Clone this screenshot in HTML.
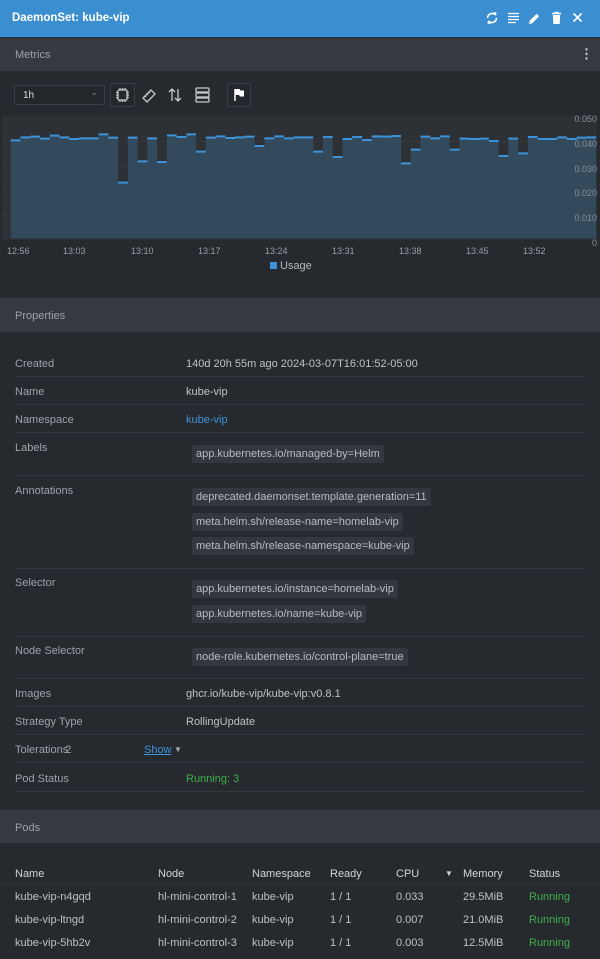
<!DOCTYPE html>
<html><head><meta charset="utf-8">
<style>
*{margin:0;padding:0;box-sizing:border-box}
body{width:600px;height:959px;background:#262a2f;font-family:"Liberation Sans",sans-serif;font-size:11px;color:#bfc1c4;position:relative;overflow:hidden}
.a{position:absolute;white-space:nowrap}
.top{position:absolute;left:0;top:0;width:600px;height:37px;background:#3b8fd0;border-bottom:1px solid #3aa0ee}
.hdr{position:absolute;left:0;width:600px;height:34px;background:#363a40;color:#9ea3a8;font-size:11px;padding:12px 15px}
.lbl{color:#9ea3a8}
.sep{position:absolute;left:15px;width:570px;height:1px;background:#33373d}
.chip{position:absolute;left:192px;height:18px;background:#34383e;color:#b9bcbf;padding:3px 4px;border-radius:2px;font-size:11px;white-space:nowrap}
.th{color:#d2d4d6;font-size:11px}
.g{color:#3fae49}
</style></head><body>
<div class="top"></div>
<div class="a" style="left:12px;top:12px;color:#fff;font-weight:bold;font-size:11.5px">DaemonSet: kube-vip</div>
<svg class="a" style="left:484px;top:9px" width="105" height="18" viewBox="0 0 105 18" fill="#fff" stroke="#fff">
<path d="M3.5 9a4.5 4.5 0 0 1 7.5-3.3M12.5 9a4.5 4.5 0 0 1-7.5 3.3" fill="none" stroke-width="1.6"/>
<path d="M9 3l3.5 0.5-0.5 3.5zM7 15l-3.5-0.5 0.5-3.5z" stroke="none"/>
<path d="M24 4.5h11M24 7.5h11M24 10.5h11M24 13.5h8" stroke-width="1.3"/>
<path d="M45 15l0.7-3.2 7-7 2.5 2.5-7 7z" stroke="none"/>
<path d="M68 4.5h9M70.5 3.5h4" stroke-width="1.5"/>
<path d="M68.8 6h7.4l-0.5 9h-6.4z" stroke="none"/>
<path d="M89.5 4.5l8 8M97.5 4.5l-8 8" stroke-width="1.6"/>
</svg>
<div style="position:absolute;left:0;top:38px;width:600px;height:1px;background:#1e2125"></div>
<div class="hdr" style="top:38px;height:33px;padding-top:11px">Metrics</div>
<div class="a" style="left:585px;top:47px;width:3px;height:14px;background:radial-gradient(circle,#bbb 1.2px,transparent 1.3px) 0 0/3px 4.6px"></div>
<div class="a" style="left:14px;top:85px;width:91px;height:20px;border:1px solid #3a3e44;border-radius:2px;background:#23262a;padding:4px 8px;color:#ddd;font-size:10px">1h<span style="position:absolute;right:6px;top:1px;color:#888;font-size:9px">&#8964;</span></div>
<div class="a" style="left:110px;top:83px;width:25px;height:24px;border:1px solid #3a3e44;border-radius:2px;background:#23262a"></div>
<svg class="a" style="left:110px;top:83px" width="140" height="24" viewBox="0 0 140 24" fill="none" stroke="#c8cacc" stroke-width="1.3">
<rect x="8" y="7" width="9" height="10" rx="1"/><path d="M10 5v2M12.5 5v2M15 5v2M10 17v2M12.5 17v2M15 17v2M6 9.5h2M6 12h2M6 14.5h2M17 9.5h2M17 12h2M17 14.5h2"/>
<path d="M33 15l8-8 4 4-8 8zM35 13l1 1M37 11l1 1M39 9l1 1"/>
<path d="M62 18V6M59 9l3-3 3 3M68 6v12M65 15l3 3 3-3"/>
<rect x="86" y="5" width="13" height="4" rx="1"/><rect x="86" y="10" width="13" height="4" rx="1"/><rect x="86" y="15" width="13" height="4" rx="1"/>
</svg>
<div class="a" style="left:227px;top:83px;width:24px;height:24px;border:1px solid #3a3e44;border-radius:2px;background:#23262a"></div>
<svg class="a" style="left:227px;top:83px" width="24" height="24" viewBox="0 0 24 24"><path d="M8 6v12" stroke="#fff" stroke-width="1.5"/><path d="M8.5 6h4l1 1.5h3.5v6h-4l-1-1.5h-3.5z" fill="#fff"/></svg>
<svg class="a" style="left:0;top:100px" width="600" height="180" viewBox="0 0 1568 540" preserveAspectRatio="none">
<rect x="5" y="48" width="1555" height="372" fill="#2d3136"/>
<g stroke="#383c42" stroke-width="2"><path d="M5 124H1560M5 198H1560M5 272H1560M5 346H1560"/></g>
<path fill="#334a5c" d="M28,415V121H53.5V112H79V110H104.5V116H130V107H155.5V112H181V117H206.5V115H232V115H257.5V103H283V113H308.5V248H334V113H359.5V184H385V115H410.5V186H436V106H461.5V111H487V103H512.5V155H538V113H563.5V109H589V114H614.5V112H640V110H665.5V138H691V115H716.5V109H742V115H767.5V112H793V112H818.5V155H844V111H869.5V171H895V117H920.5V111H946V120H971.5V109H997V110H1022.5V108H1048V190H1073.5V149H1099V110H1124.5V115H1150V109H1175.5V149H1201V116H1226.5V117H1252V116H1277.5V123H1303V168H1328.5V116H1354V160H1379.5V111H1405V117H1430.5V117H1456V112H1481.5V117H1507V113H1532.5V112H1558V415Z"/>
<path stroke="#3d93da" stroke-width="6" fill="none" d="M28,121H53.5M53.5,112H79M79,110H104.5M104.5,116H130M130,107H155.5M155.5,112H181M181,117H206.5M206.5,115H232M232,115H257.5M257.5,103H283M283,113H308.5M308.5,248H334M334,113H359.5M359.5,184H385M385,115H410.5M410.5,186H436M436,106H461.5M461.5,111H487M487,103H512.5M512.5,155H538M538,113H563.5M563.5,109H589M589,114H614.5M614.5,112H640M640,110H665.5M665.5,138H691M691,115H716.5M716.5,109H742M742,115H767.5M767.5,112H793M793,112H818.5M818.5,155H844M844,111H869.5M869.5,171H895M895,117H920.5M920.5,111H946M946,120H971.5M971.5,109H997M997,110H1022.5M1022.5,108H1048M1048,190H1073.5M1073.5,149H1099M1099,110H1124.5M1124.5,115H1150M1150,109H1175.5M1175.5,149H1201M1201,116H1226.5M1226.5,117H1252M1252,116H1277.5M1277.5,123H1303M1303,168H1328.5M1328.5,116H1354M1354,160H1379.5M1379.5,111H1405M1405,117H1430.5M1430.5,117H1456M1456,112H1481.5M1481.5,117H1507M1507,113H1532.5M1532.5,112H1558"/>
</svg>
<div class="a" style="right:3px;top:107px;font-size:9px;color:#8a8e93;text-align:right;line-height:24.8px">0.050<br>0.040<br>0.030<br>0.020<br>0.010<br>0</div>
<div class="a" style="top:246px;left:0;width:600px;font-size:9px;color:#9a9ea3">
<span class="a" style="left:7px">12:56</span><span class="a" style="left:63px">13:03</span><span class="a" style="left:131px">13:10</span><span class="a" style="left:198px">13:17</span><span class="a" style="left:265px">13:24</span><span class="a" style="left:332px">13:31</span><span class="a" style="left:399px">13:38</span><span class="a" style="left:466px">13:45</span><span class="a" style="left:523px">13:52</span></div>
<div class="a" style="left:270px;top:260px;font-size:11px;color:#b5b8bb"><span style="display:inline-block;width:7px;height:7px;background:#3d93da;margin-right:3px"></span>Usage</div>
<div class="hdr" style="top:298px">Properties</div>
<div class="a lbl" style="left:15px;top:358px">Created</div><div class="a" style="left:186px;top:358px">140d 20h 55m ago 2024-03-07T16:01:52-05:00</div>
<div class="sep" style="top:376px"></div>
<div class="a lbl" style="left:15px;top:386px">Name</div><div class="a" style="left:186px;top:386px">kube-vip</div>
<div class="sep" style="top:404px"></div>
<div class="a lbl" style="left:15px;top:414px">Namespace</div><div class="a" style="left:186px;top:414px;color:#3d93da">kube-vip</div>
<div class="sep" style="top:432px"></div>
<div class="a lbl" style="left:15px;top:442px">Labels</div><div class="chip" style="top:445px">app.kubernetes.io/managed-by=Helm</div>
<div class="sep" style="top:475px"></div>
<div class="a lbl" style="left:15px;top:485px">Annotations</div>
<div class="chip" style="top:488px">deprecated.daemonset.template.generation=11</div>
<div class="chip" style="top:513px">meta.helm.sh/release-name=homelab-vip</div>
<div class="chip" style="top:537px">meta.helm.sh/release-namespace=kube-vip</div>
<div class="sep" style="top:568px"></div>
<div class="a lbl" style="left:15px;top:577px">Selector</div>
<div class="chip" style="top:580px">app.kubernetes.io/instance=homelab-vip</div>
<div class="chip" style="top:605px">app.kubernetes.io/name=kube-vip</div>
<div class="sep" style="top:636px"></div>
<div class="a lbl" style="left:15px;top:645px">Node Selector</div>
<div class="chip" style="top:648px">node-role.kubernetes.io/control-plane=true</div>
<div class="sep" style="top:678px"></div>
<div class="a lbl" style="left:15px;top:688px">Images</div><div class="a" style="left:186px;top:688px">ghcr.io/kube-vip/kube-vip:v0.8.1</div>
<div class="sep" style="top:706px"></div>
<div class="a lbl" style="left:15px;top:716px">Strategy Type</div><div class="a" style="left:186px;top:716px">RollingUpdate</div>
<div class="sep" style="top:734px"></div>
<div class="a lbl" style="left:15px;top:744px">Toleration<span style="letter-spacing:-3px">s</span>2</div><div class="a" style="left:144px;top:744px;color:#3d93da;text-decoration:underline">Show</div><div class="a" style="left:174px;top:745px;color:#aaa;font-size:8px">&#9660;</div>
<div class="sep" style="top:762px"></div>
<div class="a lbl" style="left:15px;top:773px">Pod Status</div><div class="a g" style="left:186px;top:773px">Running: 3</div>
<div class="sep" style="top:791px"></div>
<div class="hdr" style="top:810px;height:33px">Pods</div>
<div class="a th" style="left:15px;top:868px">Name</div><div class="a th" style="left:158px;top:868px">Node</div><div class="a th" style="left:252px;top:868px">Namespace</div><div class="a th" style="left:330px;top:868px">Ready</div><div class="a th" style="left:396px;top:868px">CPU</div><div class="a th" style="left:445px;top:869px;font-size:8px">&#9660;</div><div class="a th" style="left:463px;top:868px">Memory</div><div class="a th" style="left:529px;top:868px">Status</div>
<div style="position:absolute;left:0;top:883px;width:600px;height:1px;background:#31353a"></div>
<div class="a" style="left:15px;top:891px">kube-vip-n4gqd</div><div class="a" style="left:158px;top:891px">hl-mini-control-1</div><div class="a" style="left:252px;top:891px">kube-vip</div><div class="a" style="left:330px;top:891px">1 / 1</div><div class="a" style="left:396px;top:891px">0.033</div><div class="a" style="left:463px;top:891px">29.5MiB</div><div class="a g" style="left:529px;top:891px">Running</div>
<div class="a" style="left:15px;top:914px">kube-vip-ltngd</div><div class="a" style="left:158px;top:914px">hl-mini-control-2</div><div class="a" style="left:252px;top:914px">kube-vip</div><div class="a" style="left:330px;top:914px">1 / 1</div><div class="a" style="left:396px;top:914px">0.007</div><div class="a" style="left:463px;top:914px">21.0MiB</div><div class="a g" style="left:529px;top:914px">Running</div>
<div class="a" style="left:15px;top:937px">kube-vip-5hb2v</div><div class="a" style="left:158px;top:937px">hl-mini-control-3</div><div class="a" style="left:252px;top:937px">kube-vip</div><div class="a" style="left:330px;top:937px">1 / 1</div><div class="a" style="left:396px;top:937px">0.003</div><div class="a" style="left:463px;top:937px">12.5MiB</div><div class="a g" style="left:529px;top:937px">Running</div>
</body></html>
